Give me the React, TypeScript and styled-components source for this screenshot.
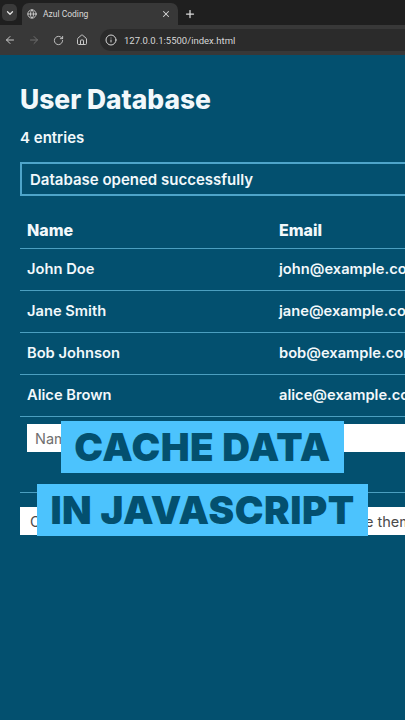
import React from 'react';
import styled, { createGlobalStyle } from 'styled-components';
import { ArrowLeft, ArrowRight, ChevronDown, Globe, Home, Info, Plus, RotateCw, X } from 'lucide-react';

const GlobalStyle = createGlobalStyle`
  html, body {
    margin: 0;
    padding: 0;
    width: 405px;
    height: 720px;
    overflow: hidden;
    background: #03506f;
  }
  * { box-sizing: border-box; }
`;

const Screen = styled.div`
  position: relative;
  width: 405px;
  height: 720px;
  overflow: hidden;
  display: flex;
  flex-direction: column;
  font-family: Inter, "Liberation Sans", sans-serif;
`;

const TabStrip = styled.div`
  height: 25px;
  flex: none;
  display: flex;
  align-items: flex-end;
  background: #1f1f1f;
  padding-left: 2px;
`;

const TabMenu = styled.div`
  width: 15px;
  height: 17px;
  margin-bottom: 4px;
  border-radius: 5px;
  background: #3a3a3a;
  color: #e4e4e4;
  display: flex;
  align-items: center;
  justify-content: center;
`;

const Tab = styled.div`
  width: 156px;
  height: 22px;
  margin-left: 5px;
  padding: 0 7px 0 5px;
  border-radius: 7px 7px 0 0;
  background: #383838;
  color: #d8d8d8;
  display: flex;
  align-items: center;
  gap: 6px;
  font-family: Roboto, sans-serif;
  font-size: 8.5px;
`;

const TabTitle = styled.span`
  flex: 1;
`;

const NewTab = styled.div`
  margin: 0 0 5px 6px;
  color: #dcdcdc;
  display: flex;
`;

const Toolbar = styled.div`
  height: 30px;
  flex: none;
  display: flex;
  align-items: center;
  background: #383838;
  padding-left: 4px;
  color: #c8c8c8;
`;

const NavButton = styled.div<{ $dim?: boolean }>`
  width: 12px;
  margin-right: 12px;
  display: flex;
  justify-content: center;
  color: ${(p) => (p.$dim ? '#6e6e6e' : '#c8c8c8')};
`;

const AddressBar = styled.div`
  flex: 1;
  height: 22px;
  padding-left: 5px;
  border-radius: 11px 0 0 11px;
  background: #2b2b2b;
  display: flex;
  align-items: center;
  gap: 7px;
  color: #d6d6d6;
  font-family: Roboto, sans-serif;
  font-size: 9.5px;
`;

const Page = styled.main`
  flex: 1;
  width: 640px;
  padding: 27px 0 0 20px;
  background: #03506f;
  color: #f2f8fb;
`;

const Title = styled.h1`
  margin: 0;
  font-size: 26.4px;
  line-height: 34px;
  font-weight: 800;
  letter-spacing: 0;
`;

const Count = styled.p`
  margin: 12px 0 0;
  font-size: 15px;
  line-height: 20px;
  font-weight: 600;
`;

const Status = styled.div`
  margin-top: 14px;
  height: 34px;
  padding-left: 8px;
  border: 2px solid #4ea5ca;
  display: flex;
  align-items: center;
  font-size: 15px;
  font-weight: 600;
`;

const Table = styled.div`
  margin-top: 17px;
`;

const Row = styled.div<{ $head?: boolean }>`
  height: ${(p) => (p.$head ? '36px' : '42px')};
  padding: 0 0 2px 7px;
  border-bottom: 1px solid #4b9fc0;
  display: grid;
  grid-template-columns: 252px 1fr;
  align-items: center;
  font-size: ${(p) => (p.$head ? '16px' : '14.7px')};
  font-weight: ${(p) => (p.$head ? 800 : 600)};
`;

const NameInput = styled.div`
  width: 600px;
  height: 28px;
  margin: 7px 0 0 7px;
  padding-left: 8px;
  background: #fff;
  color: #6f6f6f;
  display: flex;
  align-items: center;
  font-size: 14.5px;
`;

const Divider = styled.div`
  height: 1px;
  margin-top: 40px;
  background: #4b9fc0;
`;

const Hint = styled.div`
  width: 620px;
  height: 28px;
  margin-top: 14px;
  padding-left: 10px;
  background: #fff;
  color: #4a4a4a;
  display: flex;
  align-items: center;
  font-size: 14.5px;
  white-space: nowrap;
`;

const Caption = styled.div`
  position: absolute;
  left: 0;
  right: 0;
  top: 421px;
  display: flex;
  flex-direction: column;
  align-items: center;
  gap: 11px;
`;

const CaptionLine = styled.div`
  height: 52px;
  padding: 0 13px;
  background: #4cc3fd;
  color: #03506f;
  display: flex;
  align-items: center;
  font-size: 38.5px;
  font-weight: 900;
  letter-spacing: 0.5px;
  white-space: nowrap;
`;

const users = [
  { name: 'John Doe', email: 'john@example.com' },
  { name: 'Jane Smith', email: 'jane@example.com' },
  { name: 'Bob Johnson', email: 'bob@example.com' },
  { name: 'Alice Brown', email: 'alice@example.com' },
];

const App = () => {
  return (
    <Screen>
      <GlobalStyle />
      <TabStrip>
        <TabMenu>
          <ChevronDown size={10} strokeWidth={3} />
        </TabMenu>
        <Tab>
          <Globe size={10} />
          <TabTitle>Azul Coding</TabTitle>
          <X size={10} strokeWidth={2.5} />
        </Tab>
        <NewTab>
          <Plus size={12} strokeWidth={2.5} />
        </NewTab>
      </TabStrip>
      <Toolbar>
        <NavButton>
          <ArrowLeft size={12} />
        </NavButton>
        <NavButton $dim>
          <ArrowRight size={12} />
        </NavButton>
        <NavButton>
          <RotateCw size={11} />
        </NavButton>
        <NavButton>
          <Home size={12} />
        </NavButton>
        <AddressBar>
          <Info size={12} />
          127.0.0.1:5500/index.html
        </AddressBar>
      </Toolbar>
      <Page>
        <Title>User Database</Title>
        <Count>4 entries</Count>
        <Status>Database opened successfully</Status>
        <Table>
          <Row $head>
            <span>Name</span>
            <span>Email</span>
          </Row>
          {users.map((u) => (
            <Row key={u.email}>
              <span>{u.name}</span>
              <span>{u.email}</span>
            </Row>
          ))}
        </Table>
        <NameInput>Name</NameInput>
        <Divider />
        <Hint>Close your browser, then re-open this page to see them</Hint>
      </Page>
      <Caption>
        <CaptionLine>CACHE DATA</CaptionLine>
        <CaptionLine>IN JAVASCRIPT</CaptionLine>
      </Caption>
    </Screen>
  );
};

export default App;
